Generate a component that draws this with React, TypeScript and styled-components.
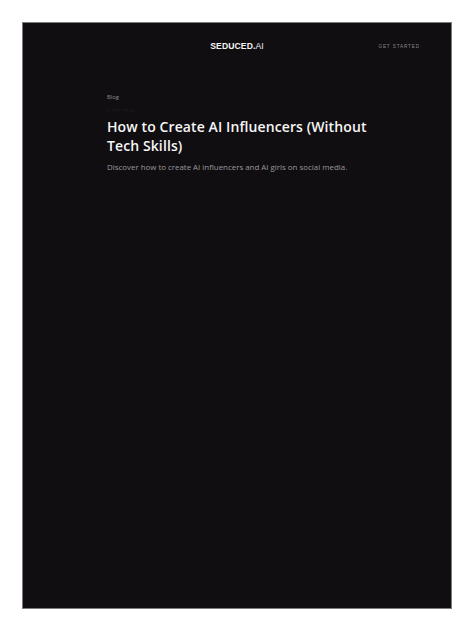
import React from "react"
import styled, { createGlobalStyle } from "styled-components"

const GlobalStyle = createGlobalStyle`
  html, body {
    margin: 0;
    padding: 0;
    background: #ffffff;
  }
  body {
    font-family: "Open Sans", "Liberation Sans", sans-serif;
  }
`

const Page = styled.div`
  padding: 22px 22px 23px 22px;
  box-sizing: border-box;
  width: 474px;
  height: 632px;
`

const Panel = styled.div`
  box-sizing: border-box;
  height: 587px;
  width: 430px;
  background: #110e11;
  border: 1px solid #7d7b7d;
  display: flex;
  flex-direction: column;
`

const Header = styled.header`
  position: relative;
  height: 46px;
  display: flex;
  align-items: center;
  justify-content: center;
`

const Logo = styled.div`
  font-family: "Liberation Sans", Arial, sans-serif;
  font-size: 8.6px;
  font-weight: 700;
  color: #f4f4f4;
  letter-spacing: 0.1px;
  span {
    font-weight: 400;
  }
`

const GetStarted = styled.a`
  position: absolute;
  right: 31px;
  top: 50%;
  transform: translateY(-50%);
  font-family: "Liberation Sans", Arial, sans-serif;
  font-size: 4.6px;
  letter-spacing: 0.9px;
  color: #8a878a;
  text-transform: uppercase;
`

const Content = styled.main`
  padding: 23px 0 0 84px;
  width: 290px;
`

const Crumb = styled.div`
  font-size: 5.8px;
  color: #8d8a8d;
  line-height: 10px;
`

const Meta = styled.div`
  margin-top: 4px;
  font-size: 5.5px;
  color: #1f1b1f;
  line-height: 8px;
`

const Title = styled.h1`
  margin: 3px 0 0 0;
  font-size: 14px;
  font-weight: 600;
  line-height: 19px;
  color: #f6f6f6;
  letter-spacing: 0.1px;
`

const Lead = styled.p`
  margin: 7px 0 0 0;
  font-size: 7.9px;
  line-height: 11px;
  color: #9a979a;
`

export default function App() {
  return (
    <>
      <GlobalStyle />
      <Page>
        <Panel>
          <Header>
            <Logo>
              SEDUCED.<span>AI</span>
            </Logo>
            <GetStarted>Get started</GetStarted>
          </Header>
          <Content>
            <Crumb>Blog</Crumb>
            <Meta>5 min read</Meta>
            <Title>How to Create AI Influencers (Without Tech Skills)</Title>
            <Lead>Discover how to create AI influencers and AI girls on social media.</Lead>
          </Content>
        </Panel>
      </Page>
    </>
  )
}
